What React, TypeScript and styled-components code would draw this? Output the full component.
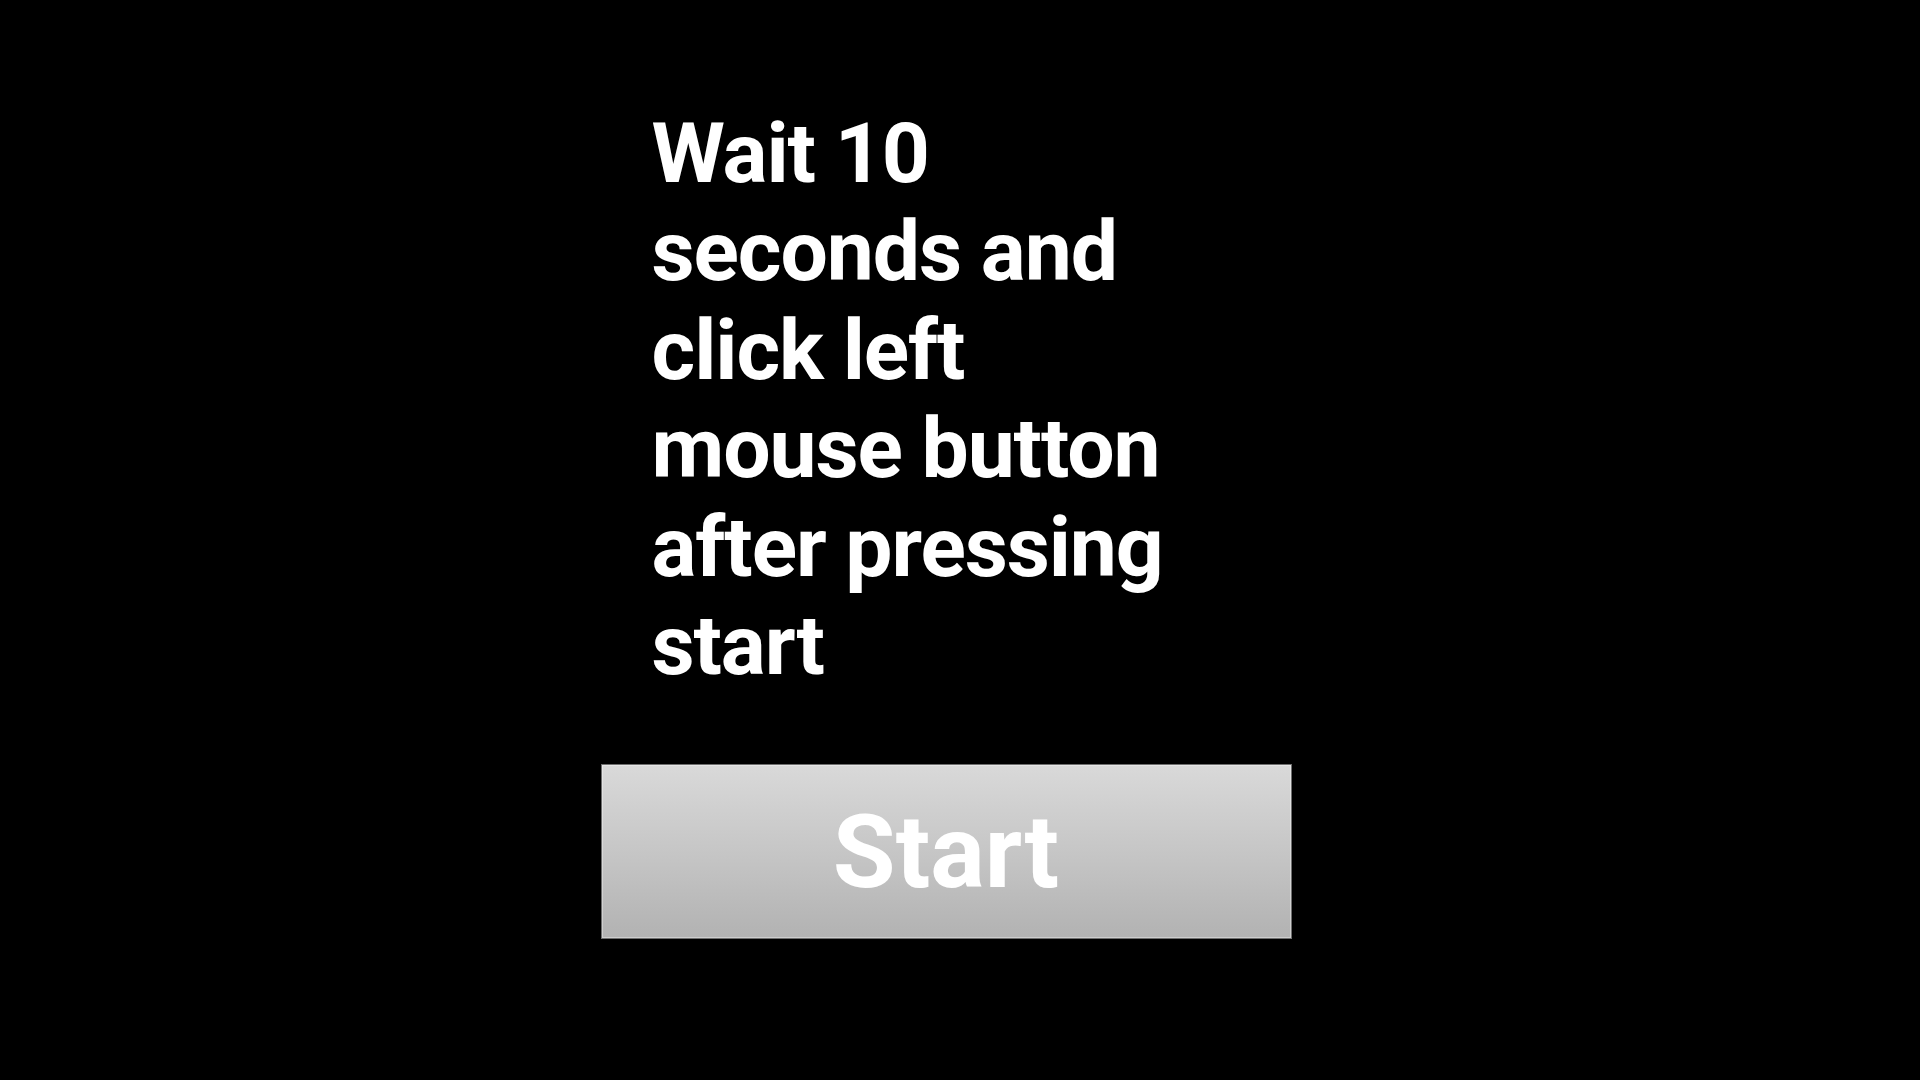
import styled, { createGlobalStyle } from 'styled-components';

const GlobalStyle = createGlobalStyle`
  html, body {
    margin: 0;
    padding: 0;
    background: #000;
  }
  body {
    font-family: Roboto, 'Liberation Sans', sans-serif;
  }
`;

function App() {
  return (
    <>
      <GlobalStyle />
      <Page>
        <Panel>
          <Instructions>
            Wait 10 seconds and click left mouse button after pressing start
          </Instructions>
          <StartButton type="button">Start</StartButton>
        </Panel>
      </Page>
    </>
  );
}

export default App;

const Page = styled.div`
  width: 100%;
  height: 1080px;
  box-sizing: border-box;
  background: #000;
  display: flex;
  justify-content: center;
  padding: 105px 28px 0 0;
`;

const Panel = styled.div`
  width: 691px;
  display: flex;
  flex-direction: column;
  gap: 69px;
`;

const Instructions = styled.p`
  margin: 0;
  padding: 0 100px 0 51px;
  color: #fff;
  font-family: Roboto, 'Liberation Sans', sans-serif;
  font-weight: 700;
  font-size: 84px;
  line-height: 98.4px;
  letter-spacing: -1.1px;
`;

const StartButton = styled.button`
  height: 175px;
  width: 100%;
  border: 1px solid #6e6e6e;
  border-radius: 0;
  box-shadow: inset 0 0 0 1px rgba(255, 255, 255, 0.35);
  background: linear-gradient(to bottom, #d9d9d9 0%, #c6c6c6 50%, #b2b2b2 100%);
  color: #fff;
  font-family: Roboto, 'Liberation Sans', sans-serif;
  font-weight: 700;
  font-size: 102px;
  padding: 0;
  cursor: pointer;
  display: flex;
  align-items: center;
  justify-content: center;
`;
